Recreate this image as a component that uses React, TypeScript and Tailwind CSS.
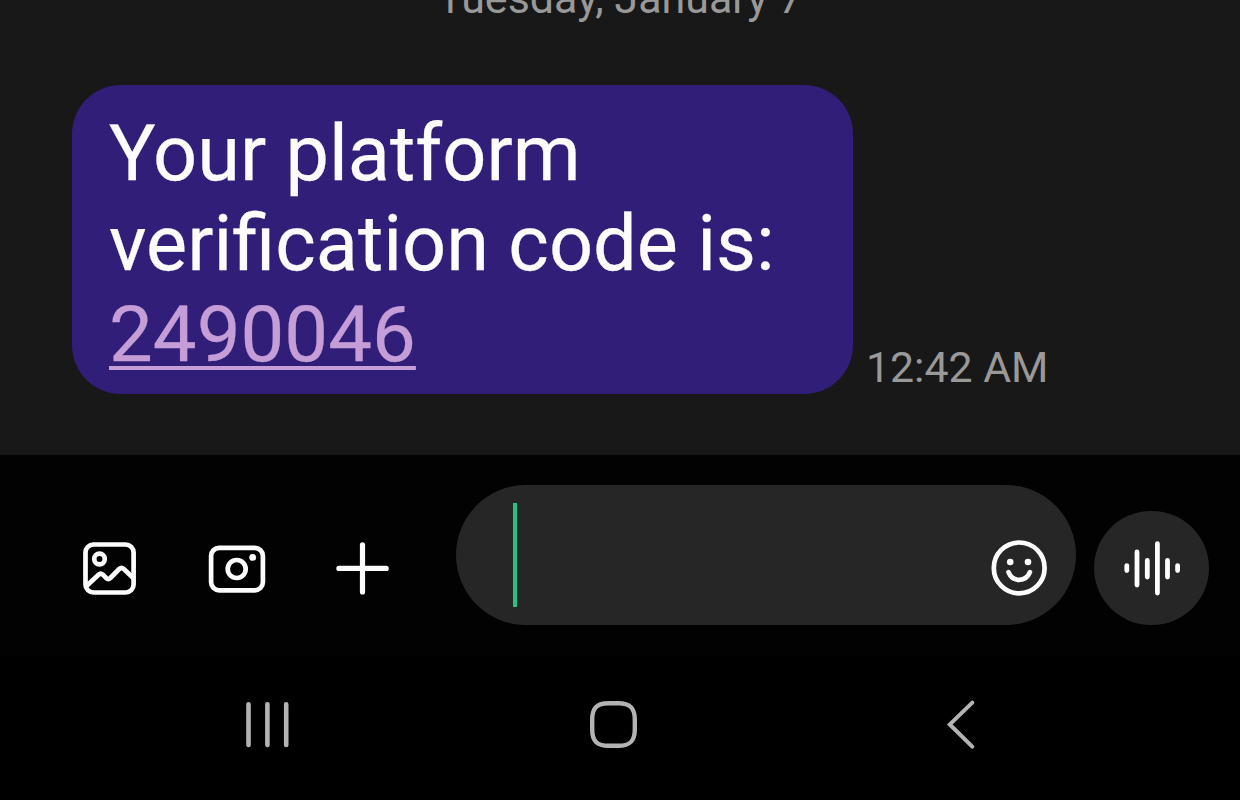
import type { ReactNode } from 'react';

interface IconButtonProps {
  label: string;
  className?: string;
  children: ReactNode;
}

function IconButton({ label, className = '', children }: IconButtonProps) {
  return (
    <button type="button" aria-label={label} className={`shrink-0 ${className}`}>
      {children}
    </button>
  );
}

function GalleryIcon() {
  return (
    <svg width="56" height="56" viewBox="0 0 56 56" fill="none" stroke="currentColor" strokeWidth="4.7" strokeLinecap="round" strokeLinejoin="round">
      <rect x="3.5" y="4.5" width="48.1" height="48" rx="8" />
      <circle cx="17.5" cy="19" r="5.3" />
      <path d="M4.5 46 L16.5 34.7 Q18.7 32.6 20.9 34.7 L24.2 38 Q26.3 40 28.4 38 L37.2 29 Q39.5 26.8 41.8 29 L51 37.8" />
    </svg>
  );
}

function CameraIcon() {
  return (
    <svg width="60" height="56" viewBox="0 0 60 56" fill="none" stroke="currentColor" strokeWidth="4.7">
      <rect x="4.1" y="7.9" width="51.8" height="42.4" rx="8" />
      <circle cx="29.7" cy="29" r="9" />
      <circle cx="45.7" cy="17.4" r="3.4" fill="currentColor" stroke="none" />
    </svg>
  );
}

function PlusIcon() {
  return (
    <svg width="56" height="56" viewBox="0 0 56 56" fill="none" stroke="currentColor" strokeWidth="5.2" strokeLinecap="round">
      <path d="M28.5 4.8 V52 M4.9 28.4 H52.2" />
    </svg>
  );
}

function EmojiIcon() {
  return (
    <svg width="58" height="56" viewBox="0 0 58 56" fill="none" stroke="currentColor" strokeWidth="4.7" strokeLinecap="round">
      <circle cx="29.2" cy="27.9" r="25.4" />
      <circle cx="20.2" cy="22" r="3.3" fill="currentColor" stroke="none" />
      <circle cx="38" cy="22" r="3.3" fill="currentColor" stroke="none" />
      <path d="M18.5 32.2 C22.5 42.4 35.9 42.4 39.9 32.2" />
    </svg>
  );
}

function VoiceIcon() {
  return (
    <svg width="58" height="58" viewBox="0 0 58 58" fill="none" stroke="currentColor" strokeWidth="4.8" strokeLinecap="round">
      <path d="M3.8 26.6 V31.6 M14 12.8 V46 M24.3 21.4 V38 M34.4 4.7 V54 M44.5 21.4 V38 M54.6 26.6 V31.6" />
    </svg>
  );
}

function RecentsIcon() {
  return (
    <svg width="48" height="52" viewBox="0 0 48 52" fill="none" stroke="currentColor" strokeWidth="4.6" strokeLinecap="round">
      <path d="M5.5 6.2 V47 M24.4 6.2 V47 M43.2 6.2 V47" />
    </svg>
  );
}

function HomeIcon() {
  return (
    <svg width="52" height="52" viewBox="0 0 52 52" fill="none" stroke="currentColor" strokeWidth="4.4">
      <path d="M20.5 5.2 H30.5 C42 5.2 46.8 10 46.8 21.5 V31.5 C46.8 43 42 47.8 30.5 47.8 H20.5 C9 47.8 4.2 43 4.2 31.5 V21.5 C4.2 10 9 5.2 20.5 5.2 Z" />
    </svg>
  );
}

function BackIcon() {
  return (
    <svg width="32" height="52" viewBox="0 0 32 52" fill="none" stroke="currentColor" strokeWidth="4" strokeLinecap="round">
      <path d="M26.3 4.6 L3.8 26.4 L26.3 48.7" />
    </svg>
  );
}

export default function App() {
  return (
    <div className="flex h-[800px] w-[1240px] flex-col overflow-hidden bg-black font-['Roboto',sans-serif]">
      <main className="h-[455px] shrink-0 overflow-hidden bg-[#181818]">
        <p className="-mt-[27px] h-[50px] text-center text-[43px] leading-[50px] text-[#999999]">
          Tuesday, January 7
        </p>
        <div className="mt-[62px] flex items-end pl-[72px]">
          <div className="h-[309px] w-[781px] rounded-[49px] bg-[#311e78] pt-[24px] pl-[37px] text-[77.5px] leading-[90.4px] text-[#fcfcfc] [-webkit-text-stroke:0.25px]">
            <p>
              Your platform
              <br />
              verification code is:
              <br />
              <span className="text-[78px] text-[#c59dd7] underline decoration-[4px] underline-offset-[5px] [text-decoration-skip-ink:none]">
                2490046
              </span>
            </p>
          </div>
          <time className="mb-[2px] ml-[13px] text-[42.8px] leading-[50px] text-[#999999]">12:42 AM</time>
        </div>
      </main>

      <section className="flex h-[201px] shrink-0 items-end bg-[#020202] pb-[31px] pl-[82px] text-[#fcfcfc]">
        <IconButton label="Gallery" className="mb-[29px]">
          <GalleryIcon />
        </IconButton>
        <IconButton label="Camera" className="mb-[29px] ml-[69px]">
          <CameraIcon />
        </IconButton>
        <IconButton label="More" className="mb-[29px] ml-[67px]">
          <PlusIcon />
        </IconButton>
        <div className="ml-[66px] flex h-[140px] w-[620px] items-end justify-between rounded-full bg-[#262626] pr-[28px] pl-[57px]">
          {/* text cursor */}
          <div className="mb-[18px] h-[104px] w-[4px] bg-[#27c085]" />
          <IconButton label="Emoji" className="mb-[29px]">
            <EmojiIcon />
          </IconButton>
        </div>
        <IconButton
          label="Voice"
          className="ml-[18px] flex h-[114px] w-[115px] items-center justify-center rounded-full bg-[#262626]"
        >
          <VoiceIcon />
        </IconButton>
      </section>

      <nav className="flex flex-1 items-start pt-[42px] pl-[243px] text-[#b3b3b3]">
        <IconButton label="Recents">
          <RecentsIcon />
        </IconButton>
        <IconButton label="Home" className="ml-[297px]">
          <HomeIcon />
        </IconButton>
        <IconButton label="Back" className="ml-[306px]">
          <BackIcon />
        </IconButton>
      </nav>
    </div>
  );
}
